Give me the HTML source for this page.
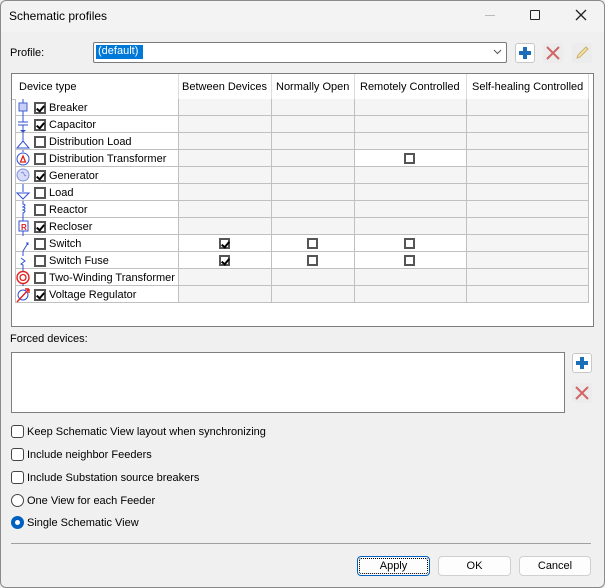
<!DOCTYPE html>
<html><head><meta charset="utf-8"><style>
*{box-sizing:border-box;margin:0;padding:0}
body{width:605px;height:588px;background:#f0f0f0;font-family:"Liberation Sans","DejaVu Sans",sans-serif;font-size:11px;color:#000;position:relative;overflow:hidden}
.a{position:absolute}
.win{left:0;top:0;width:605px;height:588px;border:1px solid #8a8a8a;border-radius:6px;background:#f0f0f0}
.title{left:1px;top:1px;width:603px;height:31px;background:#f3f3f3;border-radius:6px 6px 0 0}
.cb{position:absolute;width:12px;height:12px;border:2px solid #555;background:#fff}
.cb.c::after{content:"";position:absolute;left:2px;top:0px;width:3px;height:6px;border:solid #000;border-width:0 2px 2px 0;transform:rotate(40deg)}
.cell{position:absolute;border-right:1px solid #c0c0c0;border-bottom:1px solid #c0c0c0;background:#f5f5f5}
.w{background:#fff}
.lbl{position:absolute;white-space:nowrap}
.btn{position:absolute;height:20px;border:1px solid #d0d0d0;border-radius:4px;background:#fdfdfd;text-align:center;line-height:18px;font-size:11px}
.ob{position:absolute;width:13px;height:13px;border:1px solid #444;border-radius:3px;background:#fff}
</style></head><body>
<div class="a win"></div>
<div class="a title"></div>
<div class="lbl" style="left:9px;top:9px;font-size:12px">Schematic profiles</div>
<div class="a" style="left:485px;top:15px;width:10px;height:1px;background:#bbb"></div>
<div class="a" style="left:530px;top:10px;width:10px;height:10px;border:1.5px solid #222;border-radius:1px"></div>
<svg class="a" style="left:575px;top:9px" width="12" height="12"><path d="M1 1L11 11M11 1L1 11" stroke="#222" stroke-width="1.3"/></svg>

<div class="lbl" style="left:10px;top:47px">Profile:</div>
<div class="a" style="left:93px;top:42px;width:414px;height:21px;background:#fff;border:1px solid #7a7a7a;border-radius:2px"></div>
<div class="a" style="left:96px;top:45px;width:47px;height:14px;background:#0078d7"></div>
<div class="lbl" style="left:98px;top:45px;color:#fff">(default)</div>
<svg class="a" style="left:493px;top:49px" width="9" height="6"><path d="M1 1L4.5 4.5L8 1" stroke="#555" fill="none"/></svg>
<div class="a" style="left:515px;top:43px;width:20px;height:20px;border:1px solid #c8c8c8;border-radius:3px;background:#fff"></div>
<svg class="a" style="left:518px;top:46px" width="14" height="14"><path d="M7 1V13M1 7H13" stroke="#1a6fb8" stroke-width="4"/></svg>
<div class="a" style="left:543px;top:43px;width:20px;height:20px;border-radius:3px;background:#ececec"></div>
<svg class="a" style="left:546px;top:46px" width="14" height="14"><path d="M1 1L13 13M13 1L1 13" stroke="#d06666" stroke-width="2"/></svg>
<div class="a" style="left:572px;top:43px;width:20px;height:20px;border-radius:3px;background:#ececec"></div>
<svg class="a" style="left:575px;top:46px" width="14" height="14"><path d="M2 12L3 9L11 1L13 3L5 11Z" fill="#f3e3a0" stroke="#c8b070"/></svg>

<div class="a" style="left:11px;top:73px;width:583px;height:254px;background:#fff;border:1px solid #7e7e7e"></div>
<div class="a" style="left:12px;top:74px;width:577px;height:26px;border-bottom:1px solid #c0c0c0"></div>
<div class="a" style="left:178px;top:74px;width:1px;height:25px;background:#dcdcdc"></div>
<div class="a" style="left:271px;top:74px;width:1px;height:25px;background:#dcdcdc"></div>
<div class="a" style="left:354px;top:74px;width:1px;height:25px;background:#dcdcdc"></div>
<div class="a" style="left:466px;top:74px;width:1px;height:25px;background:#dcdcdc"></div>
<div class="a" style="left:588px;top:74px;width:1px;height:25px;background:#dcdcdc"></div>
<div class="lbl" style="left:19px;top:81px">Device type</div>
<div class="lbl" style="left:182px;top:81px">Between Devices</div>
<div class="lbl" style="left:276px;top:81px">Normally Open</div>
<div class="lbl" style="left:360px;top:81px">Remotely Controlled</div>
<div class="lbl" style="left:472px;top:81px">Self-healing Controlled</div>
<div id="rows"></div>
<div class="a" style="left:15px;top:99px;width:1px;height:204px;background:#c0c0c0"></div>

<script>
var names=["Breaker","Capacitor","Distribution Load","Distribution Transformer","Generator","Load","Reactor","Recloser","Switch","Switch Fuse","Two-Winding Transformer","Voltage Regulator"];
var chk=[1,1,0,0,1,0,0,1,0,0,0,1];
var B='stroke="#3050d0" fill="none" stroke-width="1"';
var ic=[
'<path d="M7 0V4M7 12V17" '+B+'/><rect x="3" y="4" width="8" height="8" fill="#c8d0f8" stroke="#4060d0"/>',
'<path d="M7 0V6M2 6H12M2 9H12M7 9V16" '+B+'/><path d="M4 14L7 17L10 14Z" fill="#3050d0"/>',
'<path d="M7 0V8M1 15L7 8L13 15Z" '+B+'/>',
'<path d="M7 0V2" '+B+'/><circle cx="7" cy="9" r="6" '+B+' stroke-width="1.4"/><path d="M4.5 12L7 6L9.5 12Z" fill="none" stroke="#e02020" stroke-width="1.3"/>',
'<circle cx="7" cy="8" r="6" fill="#d8dcf8" stroke="#8090e0"/><path d="M5 6Q7 4 8 7Q9 10 10 8" stroke="#8090e0" fill="none"/>',
'<path d="M7 0V8M1 9H13L7 15Z" '+B+'/>',
'<path d="M7 0V3Q11 4 7 6Q11 7 7 9Q11 10 7 12V17" '+B+' stroke-width="1.3"/>',
'<path d="M7 0V3M7 13V17" '+B+'/><rect x="3" y="3" width="9" height="10" fill="#fff" stroke="#3050d0"/><text x="5" y="12" font-size="8" font-weight="bold" fill="#e02020" font-family="Liberation Sans">R</text>',
'<path d="M7 0V1M7 16V17M7 16L12 8M10 8H12V10" '+B+'/>',
'<path d="M7 0V4M5 6L9 9L5 12L7 13V17" '+B+'/>',
'<path d="M7 0V2M7 15V17" '+B+'/><circle cx="7" cy="8.5" r="6" stroke="#e02020" fill="none" stroke-width="1.4"/><circle cx="7" cy="8.5" r="3" stroke="#e02020" fill="none" stroke-width="1.3"/>',
'<circle cx="7" cy="9" r="5" '+B+'/><path d="M1 16L13 3M13 3L9 3M13 3L13 7" stroke="#e02020" fill="none" stroke-width="1.4"/>'
];
var h='';
for(var i=0;i<12;i++){
 var y=99+i*17;
 h+='<div class="cell" style="left:15px;top:'+y+'px;width:164px;height:17px;background:#fff"></div>';
 var cols=[[178,94],[271,84],[354,113],[466,123]];
 for(var c=0;c<4;c++){
  var white=(i==8||i==9)&&c<3 || (i==3&&c==2);
  h+='<div class="cell'+(white?' w':'')+'" style="left:'+cols[c][0]+'px;top:'+y+'px;width:'+cols[c][1]+'px;height:17px;border-left:1px solid #c0c0c0"></div>';
 }
 h+='<svg class="a" style="left:16px;top:'+y+'px" width="16" height="17">'+ic[i]+'</svg>';
 h+='<div class="cb'+(chk[i]?' c':'')+'" style="left:34px;top:'+(y+3)+'px"></div>';
 h+='<div class="lbl" style="left:49px;top:'+(y+3)+'px">'+names[i]+'</div>';
 if(i==8||i==9){
  h+='<div class="cb c" style="left:219px;top:'+(y+3)+'px;width:11px;height:11px"></div>';
  h+='<div class="cb" style="left:307px;top:'+(y+3)+'px;width:11px;height:11px"></div>';
  h+='<div class="cb" style="left:404px;top:'+(y+3)+'px;width:11px;height:11px"></div>';
 }
 if(i==3) h+='<div class="cb" style="left:404px;top:'+(y+3)+'px;width:11px;height:11px"></div>';
}
document.getElementById('rows').innerHTML=h;
</script>

<div class="lbl" style="left:10px;top:333px">Forced devices:</div>
<div class="a" style="left:11px;top:352px;width:554px;height:61px;background:#fff;border:1px solid #7e7e7e"></div>
<div class="a" style="left:572px;top:353px;width:20px;height:20px;border:1px solid #c8c8c8;border-radius:3px;background:#fff"></div>
<svg class="a" style="left:575px;top:356px" width="14" height="14"><path d="M7 1V13M1 7H13" stroke="#1a6fb8" stroke-width="4"/></svg>
<div class="a" style="left:572px;top:383px;width:20px;height:20px;border-radius:3px;background:#ececec"></div>
<svg class="a" style="left:575px;top:386px" width="14" height="14"><path d="M1 1L13 13M13 1L1 13" stroke="#d06666" stroke-width="2"/></svg>

<div class="ob" style="left:11px;top:425px"></div><div class="lbl" style="left:27px;top:426px">Keep Schematic View layout when synchronizing</div>
<div class="ob" style="left:11px;top:448px"></div><div class="lbl" style="left:27px;top:449px">Include neighbor Feeders</div>
<div class="ob" style="left:11px;top:471px"></div><div class="lbl" style="left:27px;top:472px">Include Substation source breakers</div>
<div class="ob" style="left:11px;top:494px;border-radius:50%"></div><div class="lbl" style="left:27px;top:495px">One View for each Feeder</div>
<div class="a" style="left:11px;top:516px;width:13px;height:13px;border-radius:50%;background:#0060c0"></div>
<div class="a" style="left:15px;top:520px;width:5px;height:5px;border-radius:50%;background:#fff"></div>
<div class="lbl" style="left:27px;top:517px">Single Schematic View</div>

<div class="a" style="left:11px;top:543px;width:580px;height:1px;background:#a0a0a0"></div>
<div class="btn" style="left:357px;top:556px;width:73px;border:1px solid #0060c0"><div style="position:absolute;inset:1px;border:1px dotted #000;border-radius:2px"></div>Apply</div>
<div class="btn" style="left:438px;top:556px;width:73px">OK</div>
<div class="btn" style="left:519px;top:556px;width:72px">Cancel</div>
</body></html>
